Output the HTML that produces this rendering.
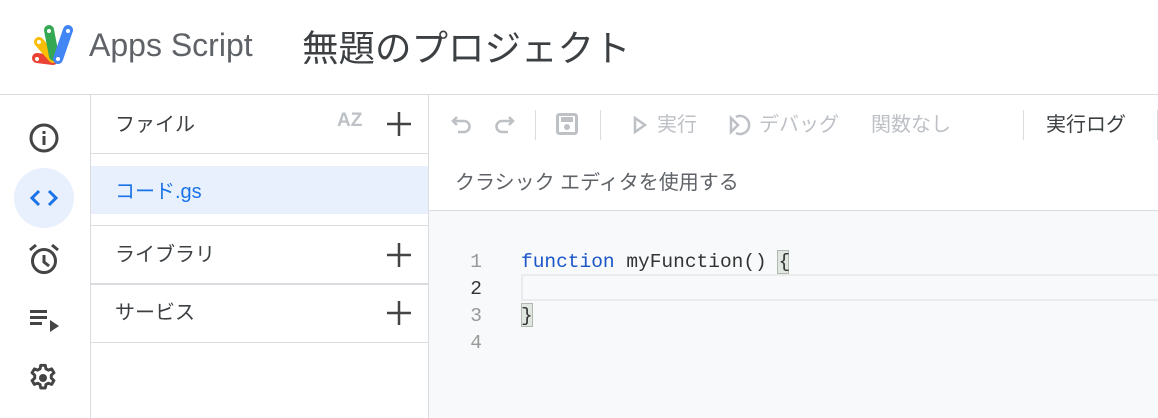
<!DOCTYPE html>
<html><head><meta charset="utf-8"><style>
*{box-sizing:border-box;margin:0;padding:0}
body{width:1158px;height:418px;overflow:hidden;background:#fff;font-family:"Liberation Sans","Noto Sans CJK JP",sans-serif;position:relative;color:#3c4043}
.abs{position:absolute}
.hl{background:#dadce0}
.t{position:absolute;white-space:nowrap}
</style></head><body>
<svg class="abs" style="left:31px;top:24px" width="52" height="42" viewBox="0 0 52 42">
<g stroke-linecap="round">
<line x1="6" y1="34" x2="22" y2="36" stroke="#ea4335" stroke-width="10"/>
<line x1="8" y1="18" x2="22" y2="34" stroke="#fbbc04" stroke-width="10"/>
<line x1="18" y1="6" x2="23" y2="32" stroke="#34a853" stroke-width="10"/>
<line x1="37" y1="6" x2="27" y2="35" stroke="#4285f4" stroke-width="10"/>
</g>
<g fill="#fff"><circle cx="6" cy="35" r="2"/><circle cx="8" cy="18" r="2"/><circle cx="18" cy="7" r="2"/><circle cx="37" cy="7" r="2"/><circle cx="27" cy="35" r="2"/></g>
</svg>
<div class="t" style="left:89px;top:27px;font-size:32px;color:#5f6368">Apps Script</div>
<div class="t" style="left:302px;top:19px;font-size:36.5px;color:#3c4043">無題のプロジェクト</div>
<div class="abs hl" style="left:0;top:94px;width:1158px;height:1px"></div>
<div class="abs hl" style="left:90px;top:95px;width:1px;height:323px"></div>
<svg class="abs" style="left:28px;top:122px" width="32" height="32" viewBox="0 0 32 32"><circle cx="16" cy="16" r="13" fill="none" stroke="#444" stroke-width="3"/><rect x="14.5" y="14" width="3" height="9" fill="#444"/><rect x="14.5" y="9" width="3" height="3" fill="#444"/></svg>
<div class="abs" style="left:14px;top:168px;width:60px;height:60px;border-radius:50%;background:#e8f0fe"></div>
<svg class="abs" style="left:28px;top:184px" width="32" height="28" viewBox="0 0 32 28"><path d="M11 7 L4 14 L11 21 M21 7 L28 14 L21 21" fill="none" stroke="#1a73e8" stroke-width="3"/></svg>
<svg class="abs" style="left:27px;top:242px" width="34" height="34" viewBox="0 0 34 34"><circle cx="17" cy="19" r="11.5" fill="none" stroke="#444" stroke-width="3"/><path d="M17 13v7l5 4" fill="none" stroke="#444" stroke-width="3"/><path d="M3 8 L9 3 M31 8 L25 3" stroke="#444" stroke-width="3"/></svg>
<svg class="abs" style="left:29px;top:308px" width="32" height="28" viewBox="0 0 32 28"><rect x="1" y="2" width="17" height="3" fill="#444"/><rect x="1" y="8" width="17" height="3" fill="#444"/><rect x="1" y="14" width="12" height="3" fill="#444"/><path d="M21 12 L30 18 L21 24Z" fill="#444"/></svg>
<svg class="abs" style="left:27px;top:362px" width="32" height="32" viewBox="0 0 24 24"><path fill="none" stroke="#444" stroke-width="2.2" stroke-linejoin="round" d="M10.3 2.5h3.4l.5 2.6 1.8 1 2.5-.9 1.7 2.9-2 1.8v2.2l2 1.8-1.7 2.9-2.5-.9-1.8 1-.5 2.6h-3.4l-.5-2.6-1.8-1-2.5.9-1.7-2.9 2-1.8v-2.2l-2-1.8 1.7-2.9 2.5.9 1.8-1z"/><circle cx="12" cy="12" r="3" fill="#444"/></svg>
<div class="abs hl" style="left:428px;top:95px;width:1px;height:323px"></div>
<div class="t" style="left:115px;top:108px;font-size:20px">ファイル</div>
<div class="t" style="left:337px;top:110px;font-size:19px;font-weight:bold;color:#bdc1c6">AZ</div>
<svg class="abs" style="left:386px;top:111px" width="26" height="26"><path d="M13 1v24M1 13h24" stroke="#444" stroke-width="2.5"/></svg>
<div class="abs hl" style="left:91px;top:153px;width:337px;height:1px"></div>
<div class="abs" style="left:91px;top:166px;width:337px;height:48px;background:#e8f0fe"></div>
<div class="t" style="left:115px;top:175px;font-size:20px;color:#1a73e8">コード.gs</div>
<div class="abs hl" style="left:91px;top:225px;width:337px;height:1px"></div>
<div class="t" style="left:115px;top:238px;font-size:20px">ライブラリ</div>
<svg class="abs" style="left:386px;top:242px" width="26" height="26"><path d="M13 1v24M1 13h24" stroke="#444" stroke-width="2.5"/></svg>
<div class="abs hl" style="left:91px;top:283px;width:337px;height:2px"></div>
<div class="t" style="left:115px;top:296px;font-size:20px">サービス</div>
<svg class="abs" style="left:386px;top:300px" width="26" height="26"><path d="M13 1v24M1 13h24" stroke="#444" stroke-width="2.5"/></svg>
<div class="abs hl" style="left:91px;top:342px;width:337px;height:1px"></div>
<svg class="abs" style="left:450px;top:113px" width="24" height="22" viewBox="0 0 24 22"><path d="M7 4 L3 8 L7 12 M3 8 H14 A5.5 5.5 0 0 1 14 19 H8" fill="none" stroke="#bdc1c6" stroke-width="2.6"/></svg>
<svg class="abs" style="left:492px;top:113px" width="24" height="22" viewBox="0 0 24 22"><path d="M17 4 L21 8 L17 12 M21 8 H10 A5.5 5.5 0 0 0 10 19 H16" fill="none" stroke="#bdc1c6" stroke-width="2.6"/></svg>
<div class="abs hl" style="left:535px;top:110px;width:1px;height:30px"></div>
<svg class="abs" style="left:556px;top:113px" width="22" height="22" viewBox="0 0 22 22"><rect x="1.5" y="1.5" width="19" height="19" rx="2" fill="none" stroke="#bdc1c6" stroke-width="3"/><rect x="5" y="4" width="12" height="5" fill="#bdc1c6"/><circle cx="11" cy="14" r="3" fill="#bdc1c6"/></svg>
<div class="abs hl" style="left:600px;top:110px;width:1px;height:30px"></div>
<svg class="abs" style="left:633px;top:116px" width="14" height="18"><path d="M2 2 L12 9 L2 16Z" fill="none" stroke="#bdc1c6" stroke-width="2.5"/></svg>
<div class="t" style="left:657px;top:108px;font-size:20px;color:#bdc1c6">実行</div>
<svg class="abs" style="left:728px;top:113px" width="24" height="24"><path d="M3 5 L10 12 L3 19Z" fill="none" stroke="#bdc1c6" stroke-width="2.5"/><path d="M8 4 A9 9 0 1 1 8 20" fill="none" stroke="#bdc1c6" stroke-width="2.5"/></svg>
<div class="t" style="left:759px;top:108px;font-size:20px;color:#bdc1c6">デバッグ</div>
<div class="t" style="left:871px;top:108px;font-size:20px;color:#bdc1c6">関数なし</div>
<div class="abs hl" style="left:1023px;top:110px;width:1px;height:30px"></div>
<div class="t" style="left:1046px;top:108px;font-size:20px;color:#3c4043">実行ログ</div>
<div class="abs hl" style="left:1157px;top:110px;width:1px;height:30px"></div>
<div class="t" style="left:455px;top:166px;font-size:20px;color:#5f6368">クラシック エディタを使用する</div>
<div class="abs hl" style="left:429px;top:210px;width:729px;height:1px"></div>
<div class="abs" style="left:429px;top:211px;width:729px;height:207px;background:#f8f9fa"></div>
<div class="abs" style="left:521px;top:274px;width:640px;height:27px;border:2px solid #eaebec"></div>
<div class="abs" style="left:777px;top:250px;width:12px;height:24px;background:#e0e7e0;border:1px solid #b0b8b0"></div>
<div class="abs" style="left:521px;top:303px;width:12px;height:24px;background:#e0e7e0;border:1px solid #b0b8b0"></div>
<div style="position:absolute;left:466px;top:249px;font-family:'Liberation Mono',monospace;font-size:19.5px;line-height:27px;color:#999;text-align:right;width:16px">1<br><span style="color:#333">2</span><br>3<br>4</div>
<div style="position:absolute;left:521px;top:249px;font-family:'Liberation Mono',monospace;font-size:19.5px;line-height:27px;color:#333;white-space:pre"><span style="color:#1a56c9">function</span> myFunction() {

}</div>
</body></html>
